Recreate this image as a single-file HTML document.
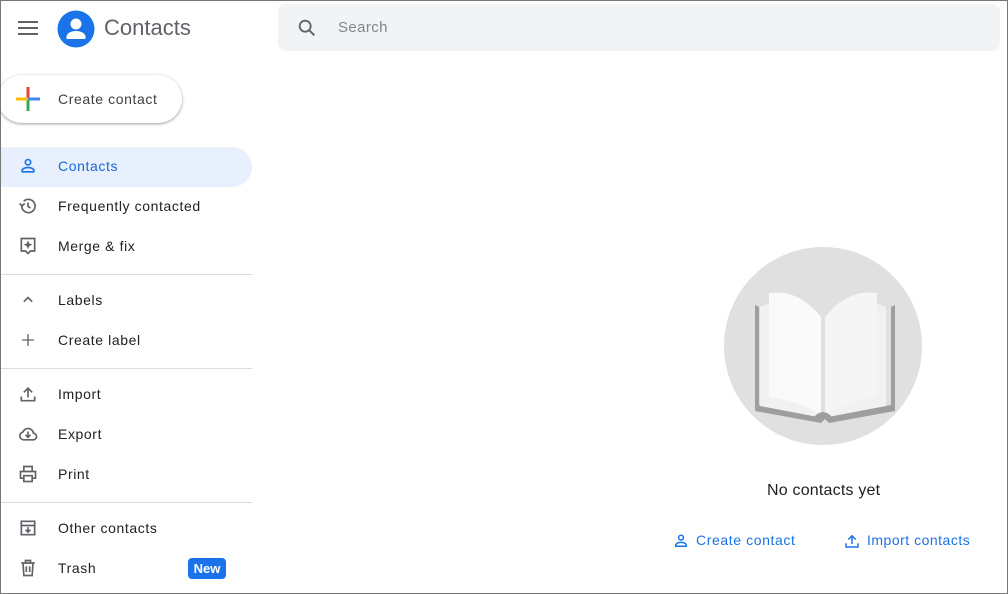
<!DOCTYPE html>
<html><head><style>
*{margin:0;padding:0;box-sizing:border-box}
body{width:1008px;height:594px;overflow:hidden;background:#fff;font-family:"Liberation Sans",Arial,sans-serif;position:relative}
.frame{position:absolute;left:0;top:0;width:1008px;height:594px;border:1px solid #777;pointer-events:none}
.a{position:absolute}
.nav{position:absolute;left:58px;font-size:14px;color:#202124;letter-spacing:.6px}
.ic{position:absolute;left:18px;width:20px;height:20px}
.hr{position:absolute;left:0;width:252px;height:1px;background:#dadce0}
</style></head><body>
<svg class="a" style="left:17px;top:18px" width="22" height="20" viewBox="0 0 22 20"><path d="M1 4h20M1 10h20M1 16h20" stroke="#5f6368" stroke-width="2"/></svg>
<svg class="a" style="left:57px;top:10px" width="38" height="38" viewBox="0 0 38 38"><circle cx="19" cy="19" r="18.5" fill="#1a73e8"/><circle cx="19" cy="14" r="5.5" fill="#fff"/><path d="M9.5 27c0-4 5-6 9.5-6s9.5 2 9.5 6v2h-19z" fill="#fff"/></svg>
<div class="a" style="left:104px;top:15px;font-size:22px;color:#5f6368">Contacts</div>
<div class="a" style="left:278px;top:4px;width:722px;height:47px;background:#f1f3f4;border-radius:8px"></div>
<svg class="a" style="left:296px;top:17px" width="22" height="22" viewBox="0 0 24 24"><circle cx="10" cy="10" r="6" fill="none" stroke="#5f6368" stroke-width="2"/><path d="M14.5 14.5l5.5 5.5" stroke="#5f6368" stroke-width="2.2"/></svg>
<div class="a" style="left:338px;top:19px;font-size:15px;color:#80868b;letter-spacing:.4px">Search</div>
<div class="a" style="left:-2px;top:75px;width:184px;height:48px;border-radius:24px;background:#fff;box-shadow:0 1px 3px rgba(60,64,67,.35),0 1px 2px rgba(60,64,67,.2)"></div>
<svg class="a" style="left:16px;top:87px" width="24" height="24" viewBox="0 0 24 24"><rect x="10.5" y="0" width="3" height="12" fill="#ea4335"/><rect x="12" y="10.5" width="12" height="3" fill="#4285f4"/><rect x="10.5" y="12" width="3" height="12" fill="#34a853"/><rect x="0" y="10.5" width="12" height="3" fill="#fbbc04"/></svg>
<div class="nav" style="top:91px;color:#3c4043">Create contact</div>
<div class="a" style="left:0;top:147px;width:252px;height:40px;background:#e8f0fe;border-radius:0 20px 20px 0"></div>
<svg class="ic" style="top:156px" viewBox="0 0 24 24" fill="none" stroke="#1a73e8" stroke-width="2"><circle cx="12" cy="7.5" r="3.2"/><path d="M5 19v-1.5c0-2.5 4-3.7 7-3.7s7 1.2 7 3.7V19z"/></svg>
<div class="nav" style="top:158px;color:#1967d2">Contacts</div>
<svg class="ic" style="top:196px" viewBox="0 0 24 24" fill="none" stroke="#5f6368" stroke-width="2"><path d="M4.5 12a8 8 0 1 0 2.3-5.6"/><path d="M2 9l3 3 3-3"/><path d="M12 8v4.5l3 2"/></svg>
<div class="nav" style="top:198px">Frequently contacted</div>
<svg class="ic" style="top:236px" viewBox="0 0 24 24" fill="none" stroke="#5f6368" stroke-width="2"><path d="M4 3h16v15h-5l-3 3-3-3H4z"/><path d="M12 6.5l1.2 2.8 2.8 1.2-2.8 1.2L12 14.5l-1.2-2.8L8 10.5l2.8-1.2z" fill="#5f6368" stroke-width="1"/></svg>
<div class="nav" style="top:238px">Merge &amp; fix</div>
<div class="hr" style="top:274px"></div>
<svg class="ic" style="top:290px" viewBox="0 0 24 24" fill="none" stroke="#5f6368" stroke-width="2"><path d="M7 14l5-5 5 5"/></svg>
<div class="nav" style="top:292px">Labels</div>
<svg class="ic" style="top:330px" viewBox="0 0 24 24" fill="none" stroke="#5f6368" stroke-width="1.6"><path d="M12 5v14M5 12h14"/></svg>
<div class="nav" style="top:332px">Create label</div>
<div class="hr" style="top:368px"></div>
<svg class="ic" style="top:384px" viewBox="0 0 24 24" fill="none" stroke="#5f6368" stroke-width="2"><path d="M12 16V5M7 10l5-5 5 5M4 15v5h16v-5"/></svg>
<div class="nav" style="top:386px">Import</div>
<svg class="ic" style="top:424px" viewBox="0 0 24 24" fill="none" stroke="#5f6368" stroke-width="2"><path d="M7 19h11a4 4 0 0 0 .5-8A6.5 6.5 0 0 0 6 9.5 4.8 4.8 0 0 0 7 19z"/><path d="M12 9v7M9 13l3 3 3-3"/></svg>
<div class="nav" style="top:426px">Export</div>
<svg class="ic" style="top:464px" viewBox="0 0 24 24" fill="none" stroke="#5f6368" stroke-width="2"><path d="M7 8V3h10v5M7 17H3V9h18v8h-4"/><rect x="7" y="14" width="10" height="7"/></svg>
<div class="nav" style="top:466px">Print</div>
<div class="hr" style="top:502px"></div>
<svg class="ic" style="top:518px" viewBox="0 0 24 24" fill="none" stroke="#5f6368" stroke-width="2"><rect x="4" y="4" width="16" height="16"/><path d="M4 9h16M12 11v6M9 14l3 3 3-3"/></svg>
<div class="nav" style="top:520px">Other contacts</div>
<svg class="ic" style="top:558px" viewBox="0 0 24 24" fill="none" stroke="#5f6368" stroke-width="2"><path d="M4 6h16M9 6V3h6v3M6 6l1 15h10l1-15M10 10v7M14 10v7"/></svg>
<div class="nav" style="top:560px">Trash</div>
<div class="a" style="left:188px;top:558px;width:38px;height:21px;background:#1a73e8;border-radius:4px;color:#fff;font-size:13px;font-weight:bold;text-align:center;line-height:21px">New</div>
<svg class="a" style="left:724px;top:247px" width="198" height="198" viewBox="0 0 198 198">
<circle cx="99" cy="99" r="99" fill="#e0e0e0"/>
<path d="M31 58v106l66 12 4-4 4 4 66-12V58l-4 2v98l-66 12-66-12V60z" fill="#9e9e9e"/>
<path d="M36 60l10-4 52 110-4 4-58-11z" fill="#f1f1f1"/>
<path d="M162 60l-10-4-52 110 4 4 58-11z" fill="#f1f1f1"/>
<path d="M45 46q30-4 52 24v98q-22-14-52-18z" fill="#fafafa"/>
<path d="M153 46q-30-4-52 24v98q22-14 52-18z" fill="#f5f5f5"/>
<path d="M90 170q9-10 18 0z" fill="#9e9e9e"/>
</svg>
<div class="a" style="left:767px;top:482px;font-size:16px;color:#202124;letter-spacing:.2px">No contacts yet</div>
<svg class="a" style="left:672px;top:532px" width="18" height="18" viewBox="0 0 24 24" fill="none" stroke="#1a73e8" stroke-width="2"><circle cx="12" cy="7.5" r="3.2"/><path d="M5 19v-1.5c0-2.5 4-3.7 7-3.7s7 1.2 7 3.7V19z"/></svg>
<div class="a" style="left:696px;top:532px;font-size:14px;color:#1a73e8;letter-spacing:.6px">Create contact</div>
<svg class="a" style="left:843px;top:532px" width="18" height="18" viewBox="0 0 24 24" fill="none" stroke="#1a73e8" stroke-width="2"><path d="M12 16V5M7 10l5-5 5 5M4 15v5h16v-5"/></svg>
<div class="a" style="left:867px;top:532px;font-size:14px;color:#1a73e8;letter-spacing:.5px">Import contacts</div>
<div class="frame"></div>
</body></html>
